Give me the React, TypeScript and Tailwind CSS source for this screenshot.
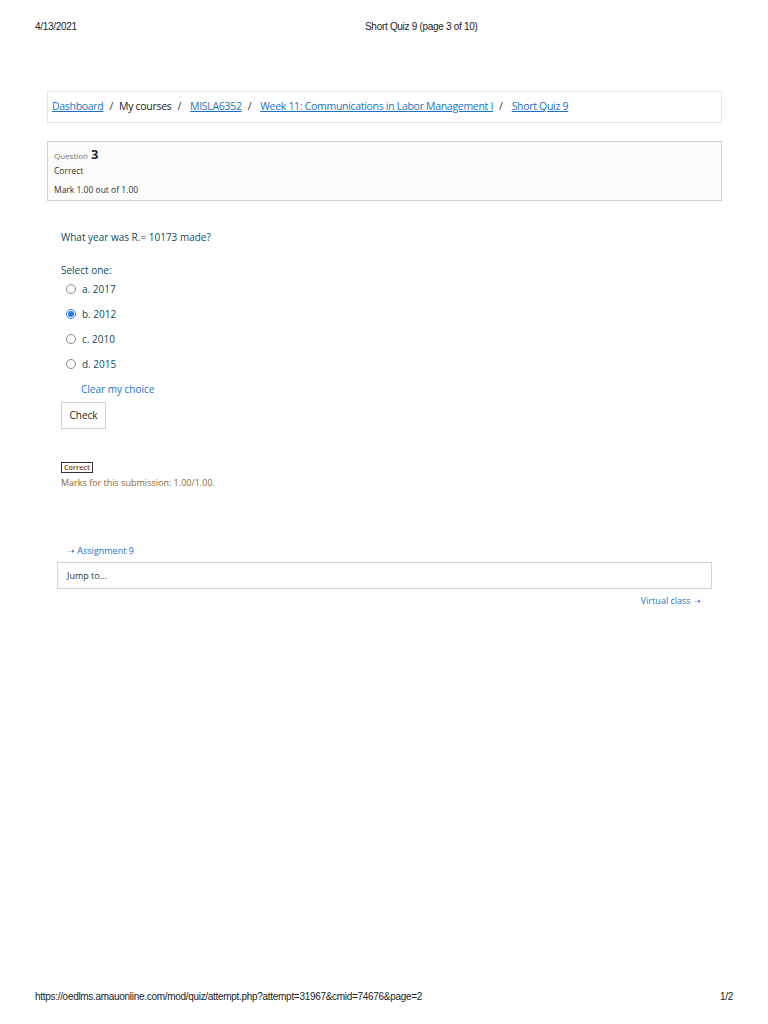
const options = [
  { label: 'a. 2017', checked: false },
  { label: 'b. 2012', checked: true },
  { label: 'c. 2010', checked: false },
  { label: 'd. 2015', checked: false },
];

function Radio({ checked }: { checked: boolean }) {
  return (
    <span
      className={
        checked
          ? 'w-[10px] h-[10px] rounded-full border border-[#2d7be0] bg-white flex items-center justify-center'
          : 'w-[10px] h-[10px] rounded-full border border-[#8a8a8a] bg-white'
      }
    >
      {checked && <span className="w-[6px] h-[6px] rounded-full bg-[#2d7be0]" />}
    </span>
  );
}

export default function App() {
  return (
    <div className="h-[1024px] w-[768px] bg-white flex flex-col font-['Open_Sans','Noto_Sans',sans-serif]">
      <header className="flex items-center pt-[19px] pl-[35px] text-[10px] text-[#222] font-['Liberation_Sans',Arial,sans-serif] tracking-[-0.3px]">
        <span className="w-[330px]">4/13/2021</span>
        <span>Short Quiz 9 (page 3 of 10)</span>
      </header>

      <main className="flex-1 pt-[57px] pl-[47px] pr-[46px]">
        <nav className="h-[32px] border border-[#e6e6e6] flex items-center pl-[4px] text-[10.5px] tracking-[-0.3px]">
          <a className="text-[#1a73c7] underline">Dashboard</a>
          <span className="mx-[6px] text-[#333]">/</span>
          <span className="text-[#222]">My courses</span>
          <span className="mx-[6px] text-[#333]">/</span>
          <a className="ml-[3px] text-[#1a73c7] underline">MISLA6352</a>
          <span className="mx-[6px] text-[#333]">/</span>
          <a className="ml-[3px] text-[#1a73c7] underline">Week 11: Communications in Labor Management I</a>
          <span className="mx-[6px] text-[#333]">/</span>
          <a className="ml-[3px] text-[#1a73c7] underline">Short Quiz 9</a>
        </nav>

        <section className="mt-[18px] h-[60px] border border-[#d2d2d2] bg-[#fbfbfb] pl-[6px] pt-[5px] text-[#333]">
          <div className="flex items-baseline gap-[3px]">
            <span className="text-[8px] text-[#777]">Question</span>
            <span className="text-[13px] font-bold text-[#222] leading-[15px]">3</span>
          </div>
          <div className="text-[8.5px] mt-[3px]">Correct</div>
          <div className="text-[8.5px] mt-[6px]">Mark 1.00 out of 1.00</div>
        </section>

        <section className="pl-[14px] mt-[29px] text-[#104b5c]">
          <p className="text-[10px] leading-[14px]">What year was R.= 10173 made?</p>
          <p className="text-[10px] mt-[19px] leading-[14px]">Select one:</p>
          <div className="flex flex-col gap-[11px] mt-[5px] pl-[5px]">
            {options.map((o) => (
              <label key={o.label} className="flex items-center gap-[6px] h-[14px] text-[10px]">
                <Radio checked={o.checked} />
                <span>{o.label}</span>
              </label>
            ))}
          </div>
          <a className="block mt-[11px] ml-[20px] text-[10px] text-[#1a73c7] leading-[14px]">Clear my choice</a>
          <button className="mt-[6px] w-[45px] h-[27px] border border-[#cfcfcf] bg-white text-[10px] text-[#222]">
            Check
          </button>

          <div className="mt-[23px]">
            <span className="inline-block border border-[#333] px-[2px] text-[7px] leading-[9px] font-bold text-[#8e662e]">
              Correct
            </span>
            <p className="text-[9px] text-[#8e662e] leading-[12px] mt-[1px]">Marks for this submission: 1.00/1.00.</p>
          </div>
        </section>

        <section className="mt-[56px] pl-[10px] pr-[10px]">
          <a className="block pl-[10px] text-[9px] text-[#1a73c7] leading-[12px]">➝ Assignment 9</a>
          <div className="mt-[5px] h-[27px] border border-[#d4d4d4] flex items-center pl-[9px] text-[9px] text-[#333]">
            Jump to...
          </div>
          <div className="flex justify-end pr-[11px] mt-[6px]">
            <a className="text-[9px] text-[#1a73c7] leading-[12px]">Virtual class ➝</a>
          </div>
        </section>
      </main>

      <footer className="flex justify-between items-center pl-[35px] pr-[35px] pb-[20px] text-[10px] text-[#222] font-['Liberation_Sans',Arial,sans-serif] tracking-[-0.3px]">
        <span>https://oedlms.amauonline.com/mod/quiz/attempt.php?attempt=31967&amp;cmid=74676&amp;page=2</span>
        <span>1/2</span>
      </footer>
    </div>
  );
}
